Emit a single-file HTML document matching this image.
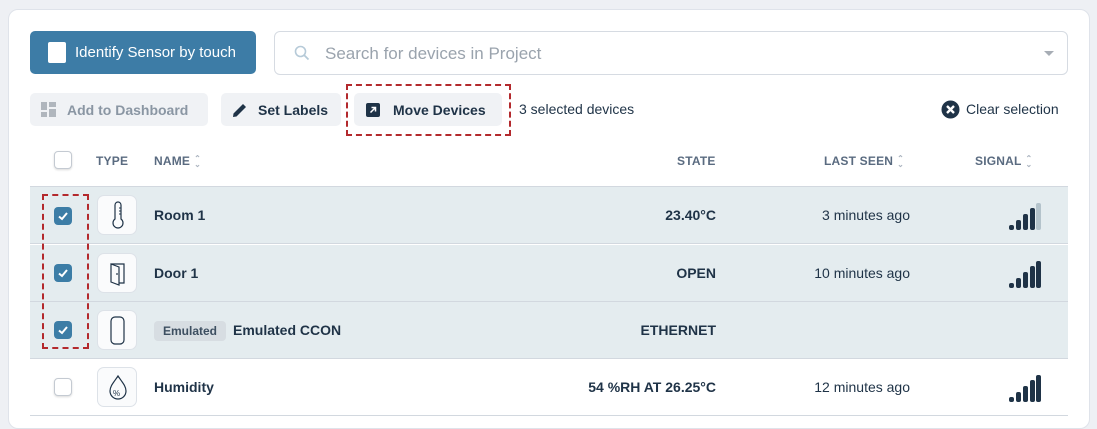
<!DOCTYPE html>
<html><head><meta charset="utf-8"><style>
*{box-sizing:border-box;margin:0;padding:0}
body{width:1097px;height:418px;background:#eef0f4;font-family:"Liberation Sans",sans-serif;position:relative;overflow:hidden;color:#1f3347}
.card{position:absolute;left:8px;top:9px;width:1082px;height:420px;background:#fff;border:1px solid #dfe3ea;border-radius:10px}
.a{position:absolute}
.btn{position:absolute;border-radius:5px;background:#f0f2f5;font-size:14px;font-weight:bold;display:flex;align-items:center}
.hdr{position:absolute;top:154px;font-size:12px;color:#5a6b80;font-weight:bold;letter-spacing:.2px}
.row{position:absolute;left:30px;width:1038px;height:57px;border-bottom:1px solid #d2d8df}
.sel{background:#e4ecef}
.cb{position:absolute;left:24px;width:18px;height:18px;border-radius:4px}
.cbo{background:#3c7da6}
.cbe{background:#fff;border:1px solid #c4cad2;box-shadow:0 1px 2px rgba(0,0,0,.15)}
.ic{position:absolute;left:67px;top:8px;width:40px;height:40px;border-radius:7px;background:#fafbfc;border:1px solid #dde2e8}
.nm{position:absolute;left:124px;top:20px;font-size:14px;font-weight:bold;color:#1f3347}
.st{position:absolute;right:352px;top:20px;font-size:14px;font-weight:bold}
.ls{position:absolute;right:158px;top:20px;font-size:14px;color:#1f3347}
.sig{position:absolute;left:979px;top:16px;height:27px;width:34px}
.sig i{position:absolute;bottom:0;width:5px;border-radius:2px;background:#1f3347}
.sort{display:inline-block;vertical-align:middle;margin-left:4px;color:#aab3bf;font-size:8px;line-height:6px}
</style></head><body>
<div class="card"></div>
<div class="a" style="left:30px;top:31px;width:226px;height:43px;background:#3d7ca6;border-radius:5px;color:#fff;font-size:15px;display:flex;align-items:center">
<div style="width:18px;height:21px;background:#fff;border-radius:2px;margin-left:18px;margin-right:9px"></div>Identify Sensor by touch</div>
<div class="a" style="left:274px;top:31px;width:794px;height:44px;border:1px solid #d6dbe2;border-radius:6px;"></div>
<svg class="a" style="left:294px;top:45px" width="16" height="16"><circle cx="6.5" cy="6.5" r="5" fill="none" stroke="#b6cad8" stroke-width="1.6"/><path d="M10 10 L14.5 14.5" stroke="#b6cad8" stroke-width="1.8"/></svg>
<div class="a" style="left:325px;top:44px;font-size:17px;color:#9aa3ad">Search for devices in Project</div>
<div class="a" style="left:1044px;top:51px;border-left:5px solid transparent;border-right:5px solid transparent;border-top:5px solid #a7adb5"></div>

<div class="btn" style="left:30px;top:93px;width:178px;height:33px;color:#8a96a3">
<svg style="margin:0 10px 0 11px" width="16" height="16"><rect x="0" y="0" width="6" height="8" fill="#b0b6bd"/><rect x="8" y="0" width="7" height="5" fill="#b0b6bd"/><rect x="0" y="10" width="6" height="5" fill="#b0b6bd"/><rect x="8" y="7" width="7" height="8" fill="#b0b6bd"/></svg>Add to Dashboard</div>
<div class="btn" style="left:221px;top:93px;width:120px;height:33px;color:#1f3347">
<svg style="margin:0 10px 0 11px" width="16" height="16"><path d="M1 15 L1.5 11.5 L11 2 L14 5 L4.5 14.5 Z" fill="#1f3347"/></svg>Set Labels</div>
<div class="a" style="left:346px;top:84px;width:165px;height:52px;border:2px dashed #b3292d"></div>
<div class="btn" style="left:354px;top:93px;width:148px;height:33px;color:#1f3347">
<svg style="margin:0 13px 0 12px" width="14" height="14"><rect width="14" height="14" rx="2" fill="#1f3347"/><path d="M4.5 9.5 L9.5 4.5 M5.5 4.5 H9.5 V8.5" stroke="#fff" stroke-width="1.5" fill="none"/></svg>Move Devices</div>
<div class="a" style="left:519px;top:101px;font-size:14px;color:#1f3347">3 selected devices</div>
<svg class="a" style="left:941px;top:100px" width="19" height="19"><circle cx="9.5" cy="9.5" r="9" fill="#1f3347"/><path d="M6 6 L13 13 M13 6 L6 13" stroke="#fff" stroke-width="2.4"/></svg>
<div class="a" style="left:966px;top:101px;font-size:14px;color:#1f3347">Clear selection</div>

<div class="a cb cbe" style="left:54px;top:151px"></div>
<div class="hdr" style="left:96px">TYPE</div>
<div class="hdr" style="left:154px">NAME<span class="sort">⌃<br>⌄</span></div>
<div class="hdr" style="left:677px">STATE</div>
<div class="hdr" style="left:824px">LAST SEEN<span class="sort">⌃<br>⌄</span></div>
<div class="hdr" style="left:975px">SIGNAL<span class="sort">⌃<br>⌄</span></div>
<div class="a" style="left:30px;top:186px;width:1038px;height:1px;background:#d2d8df"></div>

<div class="row sel" style="top:187px">
<div class="cb cbo" style="top:20px"><svg width="18" height="18"><path d="M5 9.5 L8 12 L13 6" stroke="#fff" stroke-width="2" fill="none"/></svg></div>
<div class="ic"><svg width="40" height="40"><path d="M17 9 a3 3 0 0 1 6 0 v14 a5 5 0 1 1 -6 0 Z" fill="none" stroke="#1f3347" stroke-width="1.2"/><path d="M21 12h2M21 15h2M21 18h2" stroke="#1f3347"/></svg></div>
<div class="nm">Room 1</div><div class="st">23.40°C</div><div class="ls">3 minutes ago</div>
<div class="sig"><i style="left:0;height:5px"></i><i style="left:7px;height:10px"></i><i style="left:14px;height:16px"></i><i style="left:21px;height:22px"></i><i style="left:27px;height:27px;background:#b4c3cb"></i></div>
</div>
<div class="row sel" style="top:245px">
<div class="cb cbo" style="top:19px"><svg width="18" height="18"><path d="M5 9.5 L8 12 L13 6" stroke="#fff" stroke-width="2" fill="none"/></svg></div>
<div class="ic"><svg width="40" height="40"><path d="M13 10 h13 v19 h-5" fill="none" stroke="#1f3347" stroke-width="1.2"/><path d="M13 10 l8 3 v18 l-8 -3 Z" fill="none" stroke="#1f3347" stroke-width="1.2"/><circle cx="19" cy="20" r=".9" fill="#1f3347"/></svg></div>
<div class="nm">Door 1</div><div class="st">OPEN</div><div class="ls">10 minutes ago</div>
<div class="sig"><i style="left:0;height:5px"></i><i style="left:7px;height:10px"></i><i style="left:14px;height:16px"></i><i style="left:21px;height:22px"></i><i style="left:27px;height:27px"></i></div>
</div>
<div class="row sel" style="top:302px">
<div class="cb cbo" style="top:19px"><svg width="18" height="18"><path d="M5 9.5 L8 12 L13 6" stroke="#fff" stroke-width="2" fill="none"/></svg></div>
<div class="ic"><svg width="40" height="40"><rect x="13" y="6" width="13" height="27" rx="4" fill="none" stroke="#1f3347" stroke-width="1.2"/></svg></div>
<div class="a" style="left:124px;top:19px;width:72px;height:20px;background:#d7dde2;border-radius:4px;font-size:12px;color:#3d4f61;text-align:center;line-height:20px;font-weight:bold">Emulated</div>
<div class="nm" style="left:203px">Emulated CCON</div><div class="st">ETHERNET</div>
</div>
<div class="row" style="top:359px">
<div class="cb cbe" style="top:19px"></div>
<div class="ic"><svg width="40" height="40"><path d="M20 8 C16 14 12 18 12 23 a8 8 0 0 0 16 0 C28 18 24 14 20 8 Z" fill="none" stroke="#1f3347" stroke-width="1.2"/><text x="15" y="28" font-size="8" font-family="Liberation Sans" fill="#1f3347">%</text></svg></div>
<div class="nm">Humidity</div><div class="st">54 %RH AT 26.25°C</div><div class="ls">12 minutes ago</div>
<div class="sig"><i style="left:0;height:5px"></i><i style="left:7px;height:10px"></i><i style="left:14px;height:16px"></i><i style="left:21px;height:22px"></i><i style="left:27px;height:27px"></i></div>
</div>
<div class="a" style="left:42px;top:194px;width:47px;height:155px;border:2px dashed #b3292d"></div>
</body></html>
